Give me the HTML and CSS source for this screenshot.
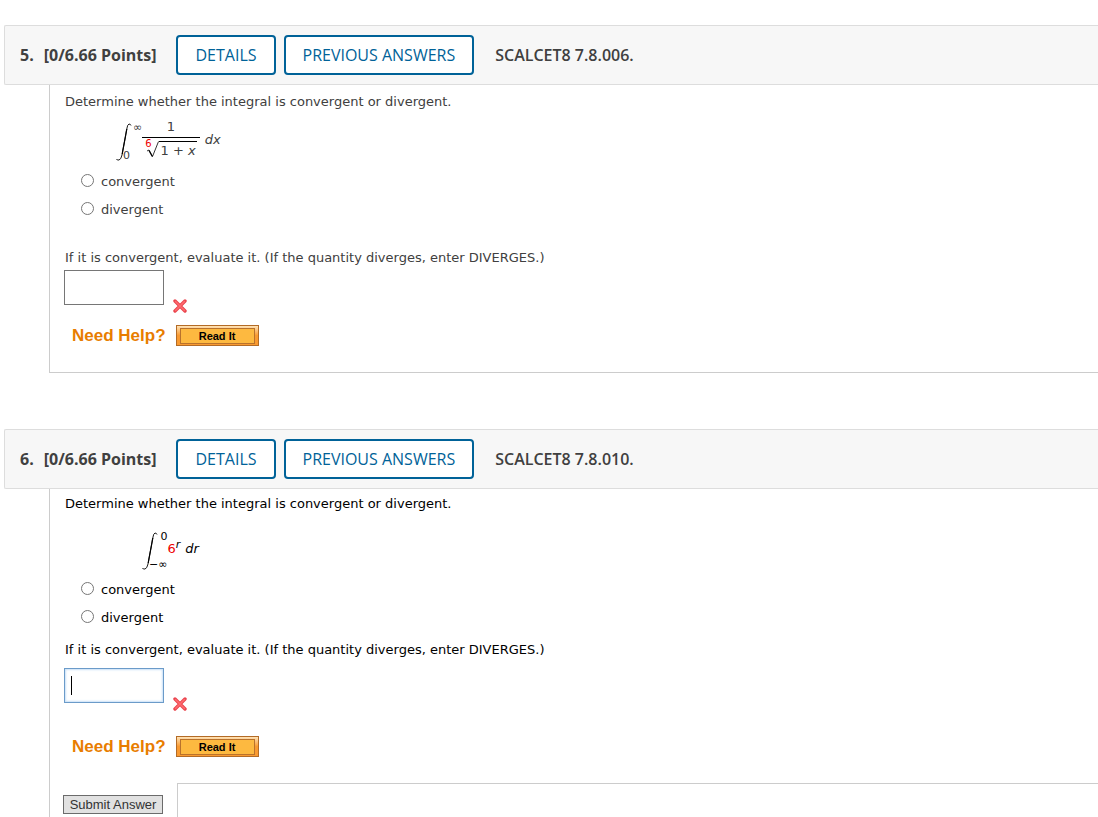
FILE: index.html
```
<!DOCTYPE html>
<html lang="en">
<head>
    <meta charset="UTF-8">
    <meta name="viewport" content="width=device-width, initial-scale=1.0">
    <title>Homework</title>
    <link rel="stylesheet" href="styles.css">
</head>
<body>

<!-- Question 5 -->
<section class="question">
    <header class="question-header">
        <span class="number">5.</span>
        <span class="points">[0/6.66 Points]</span>
        <button type="button" class="header-button">DETAILS</button>
        <button type="button" class="header-button">PREVIOUS ANSWERS</button>
        <span class="source">SCALCET8 7.8.006.</span>
    </header>
    <div class="question-body answered">
        <p>Determine whether the integral is convergent or divergent.</p>
        <div class="math">
            <svg class="integral" viewBox="0 0 16 38"><path d="M15 2.500Q14.500 1 13 1Q11.500 1.500 11 5L6 32Q5 36.500 3 37Q1 37.500 .5 36" fill="none" stroke="#000" stroke-width=".9"/><path d="M10.800 6L6.200 31" stroke="#000" stroke-width="1.200"/></svg>
            <span class="limits"><span>∞</span><span class="lower">0</span></span>
            <span class="fraction">
                <span class="numerator">1</span>
                <span class="root">
                    <span class="root-index">6</span>
                    <svg class="radical" viewBox="0 0 13 18"><path d="M1 10L3 9L6.500 15.500L12.500 .5" fill="none" stroke="#000" stroke-width=".8"/><path d="M3 9.500L6.300 15.500" stroke="#000" stroke-width="1.200"/></svg>
                    <span class="radicand">1 + <i>x</i></span>
                </span>
            </span>
            <i class="differential">dx</i>
        </div>
        <label class="option"><input type="radio" name="q5">convergent</label>
        <label class="option"><input type="radio" name="q5">divergent</label>
        <label class="prompt" for="answer5">If it is convergent, evaluate it. (If the quantity diverges, enter DIVERGES.)</label>
        <div class="answer">
            <input type="text" id="answer5" class="answer-box">
            <svg class="wrong" viewBox="0 0 14 14"><path d="M2 2L12 12M12 2L2 12" stroke="#e9434c" stroke-width="3.400" stroke-linecap="round"/><path d="M2.500 2.500L11.500 11.500M11.500 2.500L2.500 11.500" stroke="#ff6b70" stroke-width="1.600" stroke-linecap="round"/></svg>
        </div>
        <div class="help">
            <span class="help-label">Need Help?</span>
            <button type="button" class="read-button"><span>Read It</span></button>
        </div>
    </div>
</section>

<!-- Question 6 -->
<section class="question current">
    <header class="question-header">
        <span class="number">6.</span>
        <span class="points">[0/6.66 Points]</span>
        <button type="button" class="header-button">DETAILS</button>
        <button type="button" class="header-button">PREVIOUS ANSWERS</button>
        <span class="source">SCALCET8 7.8.010.</span>
    </header>
    <div class="question-body">
        <p>Determine whether the integral is convergent or divergent.</p>
        <div class="math">
            <svg class="integral" viewBox="0 0 16 38"><path d="M15 2.500Q14.500 1 13 1Q11.500 1.500 11 5L6 32Q5 36.500 3 37Q1 37.500 .5 36" fill="none" stroke="#000" stroke-width=".9"/><path d="M10.800 6L6.200 31" stroke="#000" stroke-width="1.200"/></svg>
            <span class="limits"><span>0</span><span class="lower">−∞</span></span>
            <span class="power"><span class="red">6</span><sup><i>r</i></sup></span>
            <i class="differential">dr</i>
        </div>
        <label class="option"><input type="radio" name="q6">convergent</label>
        <label class="option"><input type="radio" name="q6">divergent</label>
        <label class="prompt" for="answer6">If it is convergent, evaluate it. (If the quantity diverges, enter DIVERGES.)</label>
        <div class="answer">
            <input type="text" id="answer6" class="answer-box active">
            <svg class="wrong" viewBox="0 0 14 14"><path d="M2 2L12 12M12 2L2 12" stroke="#e9434c" stroke-width="3.400" stroke-linecap="round"/><path d="M2.500 2.500L11.500 11.500M11.500 2.500L2.500 11.500" stroke="#ff6b70" stroke-width="1.600" stroke-linecap="round"/></svg>
        </div>
        <div class="help">
            <span class="help-label">Need Help?</span>
            <button type="button" class="read-button"><span>Read It</span></button>
        </div>
        <div class="submit-row">
            <button type="submit" class="submit-button">Submit Answer</button>
            <div class="submit-panel"></div>
        </div>
    </div>
</section>

</body>
</html>
```
FILE: styles.css
```
* {
    box-sizing: border-box;
}
body {
    margin: 0;
    padding: 25px 0 0 4px;
    min-height: 100vh;
    display: flex;
    flex-direction: column;
    gap: 56px;
    background-color: #fff;
    color: #000;
    font-family: Verdana, "DejaVu Sans", sans-serif;
    font-size: 13px;
    line-height: 20px;
}
p {
    margin: 0;
}
.question-header {
    display: flex;
    align-items: center;
    height: 60px;
    padding-left: 15px;
    background-color: #f7f7f7;
    border: 1px solid #ddd;
    border-right: none;
    border-radius: 2px 0 0 2px;
    color: #404040;
    font-family: "Open Sans", sans-serif;
    font-size: 16px;
    font-weight: 700;
}
.points {
    margin: 0 20px 0 10px;
}
.header-button {
    height: 40px;
    margin-right: 8px;
    padding: 0 17px;
    border: 2px solid #006298;
    border-radius: 4px;
    background-color: #fff;
    color: #006298;
    font-family: inherit;
    font-size: 16px;
    font-weight: 500;
    cursor: pointer;
}
.source {
    margin-left: 13px;
    font-weight: 600;
}
.question-body {
    margin-left: 45px;
    padding: 5px 0 0 15px;
    border-left: 1px solid #ccc;
}
.answered {
    padding: 7px 0 26px 15px;
    border-bottom: 1px solid #ccc;
    color: #404040;
}
.current, .current .question-body {
    display: flex;
    flex-direction: column;
    flex: 1;
}

/* math */
.math {
    display: flex;
    align-items: center;
    height: 38px;
    margin: 11px 0 6px 51px;
}
.current .math {
    margin: 18px 0 5px 77px;
}
.integral {
    width: 16px;
    height: 38px;
}
.limits {
    display: flex;
    flex-direction: column;
    justify-content: space-between;
    height: 38px;
    padding-left: 1px;
    font-size: 11px;
    line-height: 10px;
}
.lower {
    margin-left: -10px;
}
.current .limits {
    align-items: flex-end;
}
.fraction {
    display: flex;
    flex-direction: column;
    margin-bottom: 8px;
}
.numerator {
    border-bottom: 1px solid #000;
    text-align: center;
    line-height: 20px;
}
.root {
    display: flex;
    padding: 3px 3px 0;
}
.root-index {
    margin-right: -6px;
    color: #e00;
    font-size: 10px;
    line-height: 6px;
}
.radical {
    width: 13px;
    height: 18px;
}
.radicand {
    padding: 0 1px 0 2px;
    border-top: 1px solid #000;
    line-height: 18px;
    white-space: nowrap;
}
.power, .differential {
    padding-bottom: 5px;
}
.differential {
    margin-left: 5px;
}
.power sup {
    font-size: 11px;
    line-height: 0;
}
.red {
    color: #e00;
}

.option {
    display: flex;
    align-items: center;
    height: 28px;
    padding: 1px 0 0 16px;
}
.option input {
    width: 13px;
    height: 13px;
    margin: 0 7px 2px 0;
}
.prompt {
    display: block;
    margin-top: 25px;
}
.current .prompt {
    margin-top: 9px;
}
.answer {
    display: flex;
    align-items: flex-end;
    height: 43px;
    margin-top: 2px;
}
.current .answer {
    margin-top: 8px;
}
.answer-box {
    align-self: flex-start;
    width: 100px;
    height: 35px;
    margin-left: -1px;
    padding: 0 6px;
    border: 1px solid #767676;
    font-size: 16px;
}
.answer-box.active {
    border-color: #6b9bc9;
    box-shadow: inset 0 0 2px 1px #c9e0f7;
    background: linear-gradient(#000, #000) 6px 7px / 1px 19px no-repeat #fff;
}
.wrong {
    width: 14px;
    height: 14px;
    margin-left: 9px;
}
.help {
    display: flex;
    align-items: center;
    margin-top: 12px;
    padding-left: 7px;
    gap: 10px;
}
.current .help {
    margin-top: 25px;
}
.help-label {
    color: #e87d00;
    font-family: Arial, "Liberation Sans", sans-serif;
    font-size: 17px;
    font-weight: bold;
}
.read-button {
    width: 83px;
    height: 21px;
    padding: 2px 3px;
    border: 1px solid #b36b26;
    background: linear-gradient(#ffe2b5, #f99a31 50%);
    font-family: Arial, "Liberation Sans", sans-serif;
    font-size: 11px;
    font-weight: bold;
    line-height: 14px;
    color: #000;
    cursor: pointer;
}
.read-button span {
    display: block;
    border: 1px solid #b9722c;
    background-color: #fdb940;
}
.submit-row {
    display: flex;
    flex: 1;
    gap: 14px;
    margin: 26px 0 0 -2px;
}
.submit-button {
    width: 100px;
    height: 19px;
    margin-top: 12px;
    padding: 0;
    border: 1px solid #6b6b6b;
    background-color: #e1e1e1;
    color: #333;
    font-family: Arial, "Liberation Sans", sans-serif;
    font-size: 13px;
    line-height: 17px;
}
.submit-panel {
    flex: 1;
    border: 1px solid #ccc;
    border-width: 1px 0 0 1px;
}
```
